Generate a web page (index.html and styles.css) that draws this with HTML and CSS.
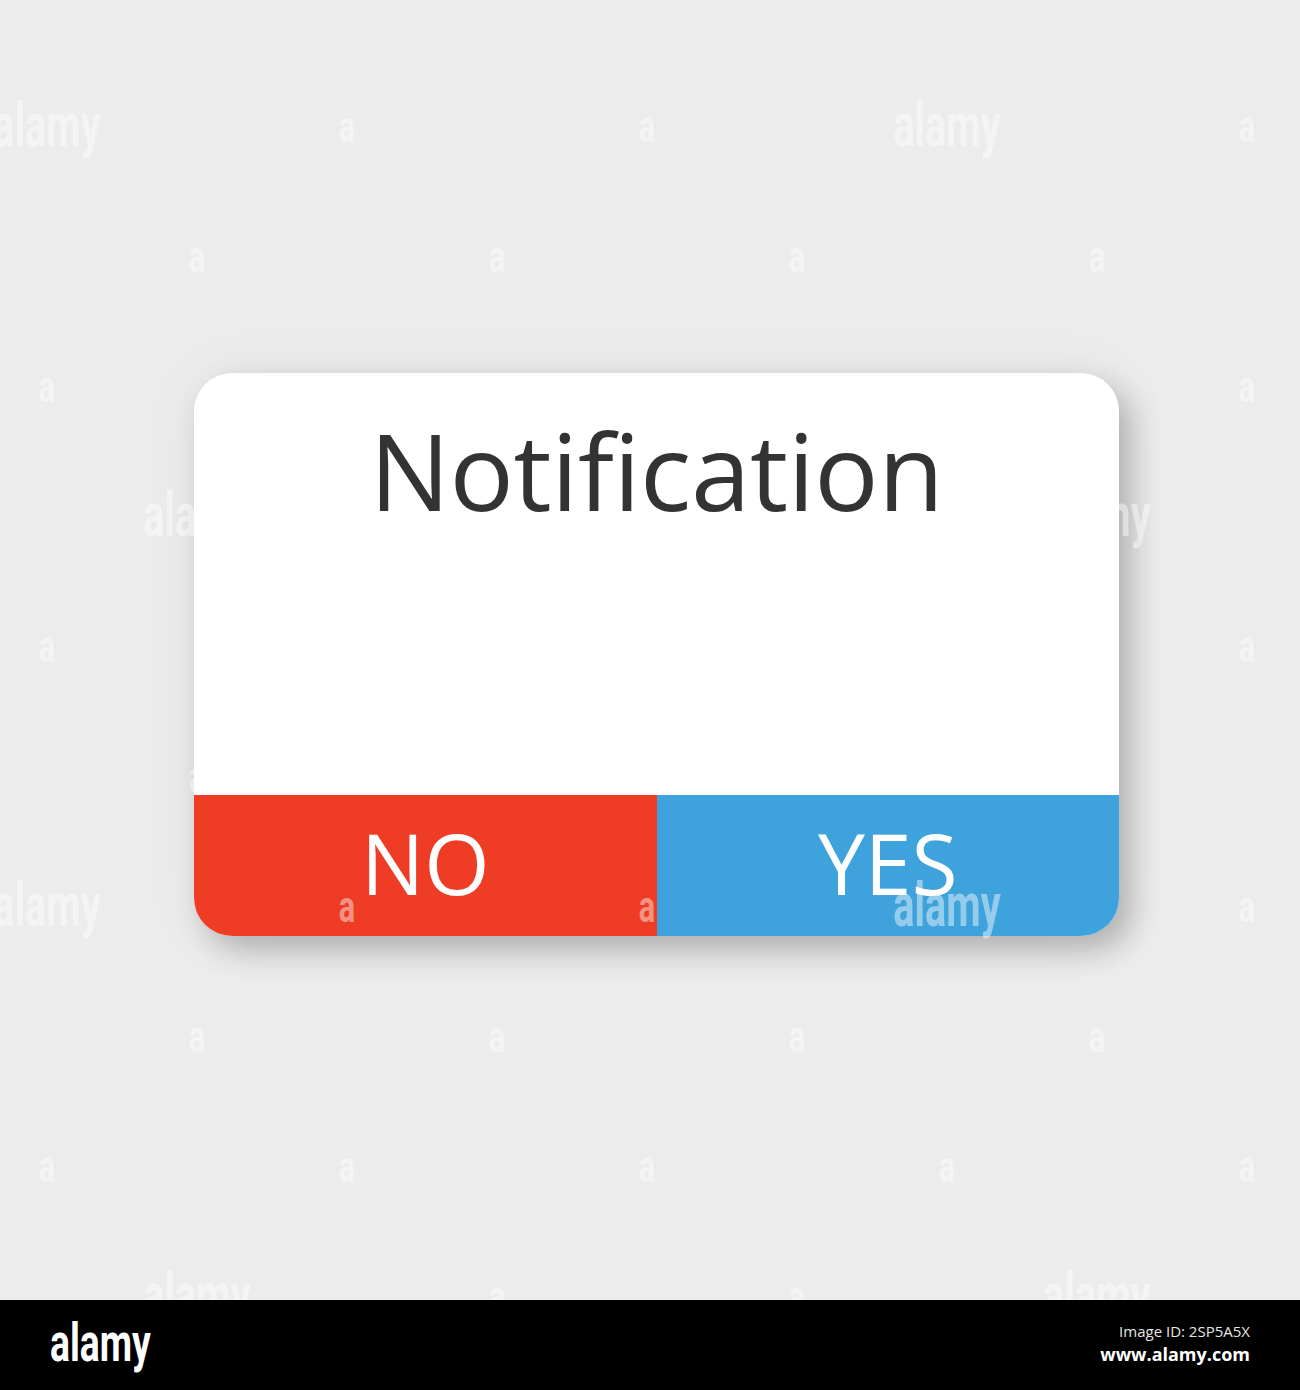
FILE: index.html
```html
<!DOCTYPE html>
<html lang="en">
<head>
<meta charset="utf-8">
<title>Notification</title>
<link rel="stylesheet" href="styles.css">
</head>
<body>
<main class="stage">
  <section class="dialog">
    <div class="dialog-body">
      <h1 class="dialog-title">Notification</h1>
    </div>
    <div class="dialog-actions">
      <button class="action action-no" type="button">NO</button>
      <button class="action action-yes" type="button">YES</button>
    </div>
  </section>

  <div class="marks" aria-hidden="true">
    <div class="mark-row even"><span class="word">alamy</span><span>a</span><span>a</span><span class="word">alamy</span><span>a</span></div>
    <div class="mark-row odd"><span>a</span><span>a</span><span>a</span><span>a</span></div>
    <div class="mark-row even"><span>a</span><span></span><span></span><span></span><span>a</span></div>
    <div class="mark-row odd"><span class="word">alamy</span><span></span><span></span><span class="word">alamy</span></div>
    <div class="mark-row even"><span>a</span><span></span><span></span><span></span><span>a</span></div>
    <div class="mark-row odd"><span>a</span><span></span><span></span><span></span></div>
    <div class="mark-row even"><span class="word">alamy</span><span>a</span><span>a</span><span class="word">alamy</span><span>a</span></div>
    <div class="mark-row odd"><span>a</span><span>a</span><span>a</span><span>a</span></div>
    <div class="mark-row even"><span>a</span><span>a</span><span>a</span><span>a</span><span>a</span></div>
    <div class="mark-row odd"><span class="word">alamy</span><span>a</span><span>a</span><span class="word">alamy</span></div>
  </div>
</main>

<footer class="footer">
  <span class="logo">alamy</span>
  <div class="footer-meta">
    <span class="image-id">Image ID: 2SP5A5X</span>
    <span class="site">www.alamy.com</span>
  </div>
</footer>
</body>
</html>
```

FILE: styles.css
```css
* {
  box-sizing: border-box;
}

html,
body {
  margin: 0;
  padding: 0;
}

body {
  width: 1300px;
  height: 1390px;
  background: #ececec;
  font-family: "Open Sans", "Noto Sans", sans-serif;
  overflow: hidden;
}

/* Canvas holding the dialog */
.stage {
  position: relative;
  height: 1300px;
  padding: 373px 0 0 194px;
  overflow: hidden;
  background: #ececec;
}

.dialog {
  width: 925px;
  height: 563px;
  display: flex;
  flex-direction: column;
  border-radius: 38px;
  overflow: hidden;
  background: #ffffff;
  box-shadow: 12px 14px 30px rgba(0, 0, 0, 0.24),
              0 0 60px 8px rgba(0, 0, 0, 0.035);
}

.dialog-body {
  flex: 1;
  display: flex;
  justify-content: center;
  padding-top: 43px;
}

.dialog-title {
  margin: 0;
  font-family: "Open Sans", "Noto Sans", sans-serif;
  font-weight: 400;
  font-size: 107px;
  line-height: 1;
  letter-spacing: -0.4px;
  color: #333333;
}

.dialog-actions {
  height: 141px;
  display: flex;
}

.action {
  flex: 1;
  display: flex;
  align-items: center;
  justify-content: center;
  padding: 0 0 6px;
  margin: 0;
  border: 0;
  font-family: "Open Sans", "Noto Sans", sans-serif;
  font-size: 84px;
  font-weight: 400;
  line-height: 1;
  color: #ffffff;
}

.action-no {
  background: #ee3d24;
}

.action-yes {
  background: #3ea2dc;
}

/* Repeating faint stamp layer drawn on top of the canvas */
.marks {
  position: absolute;
  top: 61px;
  left: 0;
  width: 1300px;
  pointer-events: none;
  z-index: 2;
}

.mark-row {
  height: 130px;
  display: flex;
  align-items: center;
}

.mark-row.even {
  margin-left: -103px;
}

.mark-row.odd {
  margin-left: 47px;
}

.mark-row span {
  flex: 0 0 300px;
  text-align: center;
  font-family: Roboto, "Liberation Sans", sans-serif;
  font-weight: 700;
  font-size: 45px;
  line-height: 1;
  color: rgba(255, 255, 255, 0.45);
  transform: scaleX(0.68);
}

.mark-row span.word {
  font-size: 62px;
  transform: scaleX(0.64) translateY(-1px);
}

/* Bottom credit strip */
.footer {
  height: 90px;
  background: #000000;
  display: flex;
  align-items: center;
  justify-content: space-between;
  padding: 0 50px 0 50px;
}

.logo {
  display: inline-block;
  font-family: Roboto, "Liberation Sans", sans-serif;
  font-weight: 700;
  font-size: 54px;
  line-height: 1;
  color: #ffffff;
  transform: scaleX(0.69);
  transform-origin: left center;
  margin-top: -4px;
}

.footer-meta {
  display: flex;
  flex-direction: column;
  align-items: flex-end;
  gap: 4px;
  margin-top: -4px;
}

.image-id {
  font-family: "Open Sans", "Noto Sans", sans-serif;
  font-size: 15px;
  line-height: 18px;
  color: #e6e6e6;
}

.site {
  font-family: "Open Sans", "Noto Sans", sans-serif;
  font-weight: 700;
  font-size: 18px;
  line-height: 20px;
  color: #ffffff;
}
```
